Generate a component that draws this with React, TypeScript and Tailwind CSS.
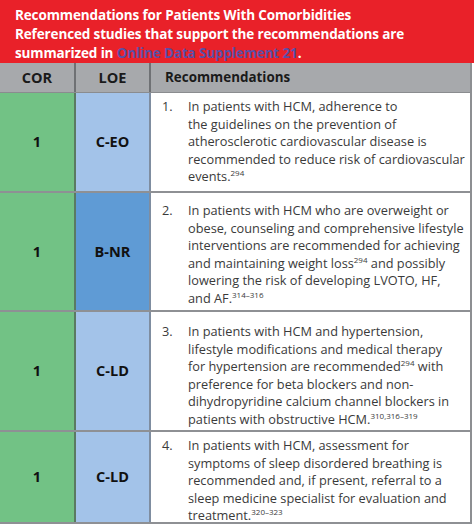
import React from 'react';

type Row = {
  cor: string;
  loe: string;
  loeDark?: boolean;
  num: string;
  lines: React.ReactNode[];
  h: string;
  pt: string;
};

const Sup = ({ children }: { children: React.ReactNode }) => (
  <span className="text-[8px] leading-none align-[5px]">{children}</span>
);

const rows: Row[] = [
  {
    cor: '1',
    loe: 'C-EO',
    num: '1.',
    h: 'h-[100px]',
    pt: 'pt-[5px]',
    lines: [
      'In patients with HCM, adherence to',
      'the guidelines on the prevention of',
      'atherosclerotic cardiovascular disease is',
      'recommended to reduce risk of cardiovascular',
      <>events.<Sup>294</Sup></>,
    ],
  },
  {
    cor: '1',
    loe: 'B-NR',
    loeDark: true,
    num: '2.',
    h: 'h-[119px]',
    pt: 'pt-[9px]',
    lines: [
      'In patients with HCM who are overweight or',
      'obese, counseling and comprehensive lifestyle',
      'interventions are recommended for achieving',
      <>and maintaining weight loss<Sup>294</Sup> and possibly</>,
      'lowering the risk of developing LVOTO, HF,',
      <>and AF.<Sup>314–316</Sup></>,
    ],
  },
  {
    cor: '1',
    loe: 'C-LD',
    num: '3.',
    h: 'h-[120px]',
    pt: 'pt-[11px]',
    lines: [
      'In patients with HCM and hypertension,',
      'lifestyle modifications and medical therapy',
      <>for hypertension are recommended<Sup>294</Sup> with</>,
      'preference for beta blockers and non-',
      'dihydropyridine calcium channel blockers in',
      <>patients with obstructive HCM.<Sup>310,316–319</Sup></>,
    ],
  },
  {
    cor: '1',
    loe: 'C-LD',
    num: '4.',
    h: 'h-[92px]',
    pt: 'pt-[5px]',
    lines: [
      'In patients with HCM, assessment for',
      'symptoms of sleep disordered breathing is',
      'recommended and, if present, referral to a',
      'sleep medicine specialist for evaluation and',
      <>treatment.<Sup>320–323</Sup></>,
    ],
  },
];

const App: React.FC = () => {
  return (
    <div className="w-[474px] h-[524px] overflow-hidden bg-white font-['Open_Sans','Noto_Sans',sans-serif]">
      <div className="bg-[#e92129] px-[15px] pt-[6px] h-[63px] text-white font-bold text-[13.5px] leading-[19px] tracking-[-0.01em]">
        <div>Recommendations for Patients With Comorbidities</div>
        <div>Referenced studies that support the recommendations are</div>
        <div>
          summarized in <span className="text-[#5a4fa6]">Online Data Supplement 21</span>.
        </div>
      </div>

      <div className="w-[472px] border-r-2 border-[#8d8f92]">
        <div className="flex h-[30px] bg-[#a7a9ac] text-[#1a1a1a] font-bold text-[14.5px] border-b border-[#8a8c8f]">
          <div className="w-[76px] shrink-0 flex items-center justify-center border-r-2 border-[#6f7174]">COR</div>
          <div className="w-[75px] shrink-0 flex items-center justify-center border-r-2 border-[#6f7174]">LOE</div>
          <div className="flex-1 flex items-center pl-[14px] text-[13.4px]">Recommendations</div>
        </div>

        {rows.map((r, i) => (
          <div key={i} className={`flex ${r.h} border-b-2 border-[#8e9094]`}>
            <div className="w-[76px] shrink-0 flex items-center justify-center bg-[#72c285] border-r-2 border-[#5a7a62] font-bold text-[14.5px] text-[#111]">
              {r.cor}
            </div>
            <div
              className={`w-[75px] shrink-0 flex items-center justify-center border-r-2 border-[#7f8da0] font-bold text-[14.5px] text-[#111] ${
                r.loeDark ? 'bg-[#5f9bd5]' : 'bg-[#a3c3e9]'
              }`}
            >
              {r.loe}
            </div>
            <div className={`flex-1 min-w-0 flex ${r.pt} text-[12.75px] leading-[17.6px] text-[#3a3a3a]`}>
              <div className="w-[37px] shrink-0 pl-[11px]">{r.num}</div>
              <div className="flex-1 min-w-0">
                {r.lines.map((l, j) => (
                  <div key={j} className="whitespace-nowrap">{l}</div>
                ))}
              </div>
            </div>
          </div>
        ))}
      </div>
    </div>
  );
};

export default App;
